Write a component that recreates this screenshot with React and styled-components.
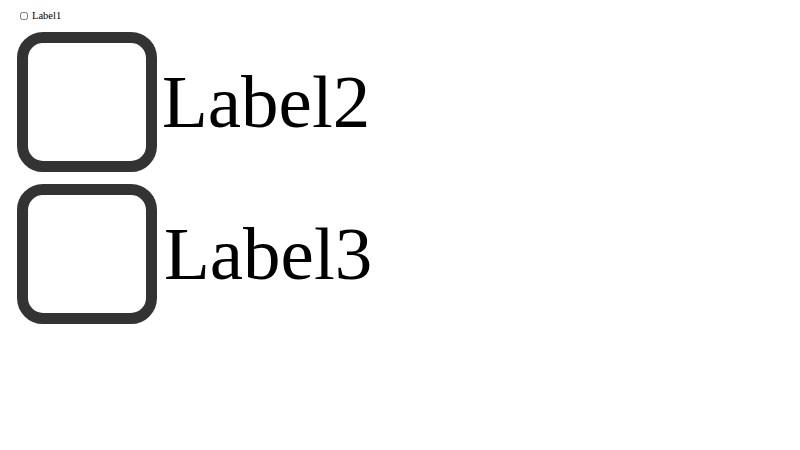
import React from "react";
import styled, { createGlobalStyle } from "styled-components";

const GlobalStyle = createGlobalStyle`
  body {
    margin: 0;
    background: #ffffff;
    font-family: "Liberation Serif", "Times New Roman", serif;
    color: #000000;
  }
`;

// Layout
const Page = styled.div`
  display: flex;
  flex-direction: column;
  align-items: flex-start;
  padding: 10px 0 0 17px;
  gap: 12px;
`;

const SmallRow = styled.label`
  display: flex;
  align-items: center;
  gap: 4px;
  margin: 0 0 -2px 3px;
  font-size: 10.5px;
  line-height: 12px;
`;

const SmallBox = styled.input`
  width: 8px;
  height: 8px;
  margin: 0;
`;

const BigRow = styled.label`
  display: flex;
  align-items: center;
  gap: ${(p) => p.$gap}px;
  font-size: 75px;
  cursor: pointer;
`;

const BigBox = styled.span`
  box-sizing: border-box;
  width: 140px;
  height: 140px;
  border: 11px solid #333333;
  border-radius: 26px;
  background: #ffffff;
  flex-shrink: 0;
`;

function App() {
  return (
    <>
      <GlobalStyle />
      <Page>
        <SmallRow>
          <SmallBox type="checkbox" />
          Label1
        </SmallRow>
        <BigRow $gap={5}>
          <BigBox />
          Label2
        </BigRow>
        <BigRow $gap={7}>
          <BigBox />
          Label3
        </BigRow>
      </Page>
    </>
  );
}

export default App;
